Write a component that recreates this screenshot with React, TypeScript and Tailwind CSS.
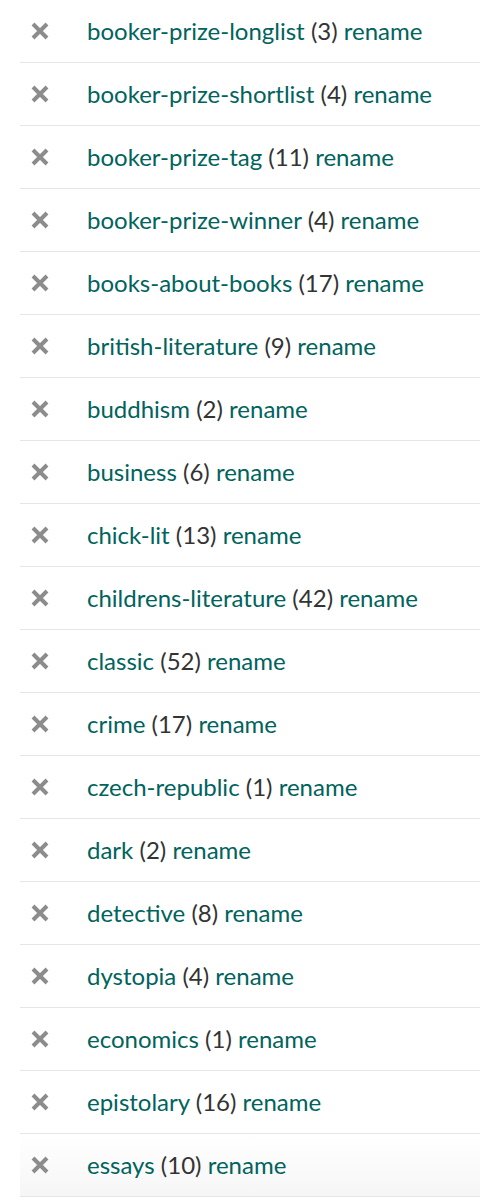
const tags: [string, number][] = [
  ["booker-prize-longlist", 3],
  ["booker-prize-shortlist", 4],
  ["booker-prize-tag", 11],
  ["booker-prize-winner", 4],
  ["books-about-books", 17],
  ["british-literature", 9],
  ["buddhism", 2],
  ["business", 6],
  ["chick-lit", 13],
  ["childrens-literature", 42],
  ["classic", 52],
  ["crime", 17],
  ["czech-republic", 1],
  ["dark", 2],
  ["detective", 8],
  ["dystopia", 4],
  ["economics", 1],
  ["epistolary", 16],
  ["essays", 10],
];

function CloseIcon() {
  return (
    <svg width="20" height="20" viewBox="0 0 20 20" className="shrink-0">
      <path d="M3 3 L17 17 M17 3 L3 17" stroke="#8c8c8c" strokeWidth="4" strokeLinecap="butt" />
    </svg>
  );
}

export default function App() {
  return (
    <div className="min-h-[1200px] bg-white pl-5 font-['Lato','Open_Sans',sans-serif]">
      <ul>
        {tags.map(([name, count], i) => (
          <li
            key={name}
            className={`flex h-[63px] items-center gap-[37px] border-b border-[#e6e6e6] pl-[10px] ${
              i === tags.length - 1 ? "bg-gradient-to-b from-white to-[#f6f6f6]" : ""
            }`}
          >
            <CloseIcon />
            <div className="text-[24px] leading-none whitespace-nowrap">
              <a href="#" className="text-[#00635d]">{name}</a>{" "}
              <span className="text-[#333333]">({count})</span>{" "}
              <a href="#" className="text-[#00635d]">rename</a>
            </div>
          </li>
        ))}
      </ul>
    </div>
  );
}
